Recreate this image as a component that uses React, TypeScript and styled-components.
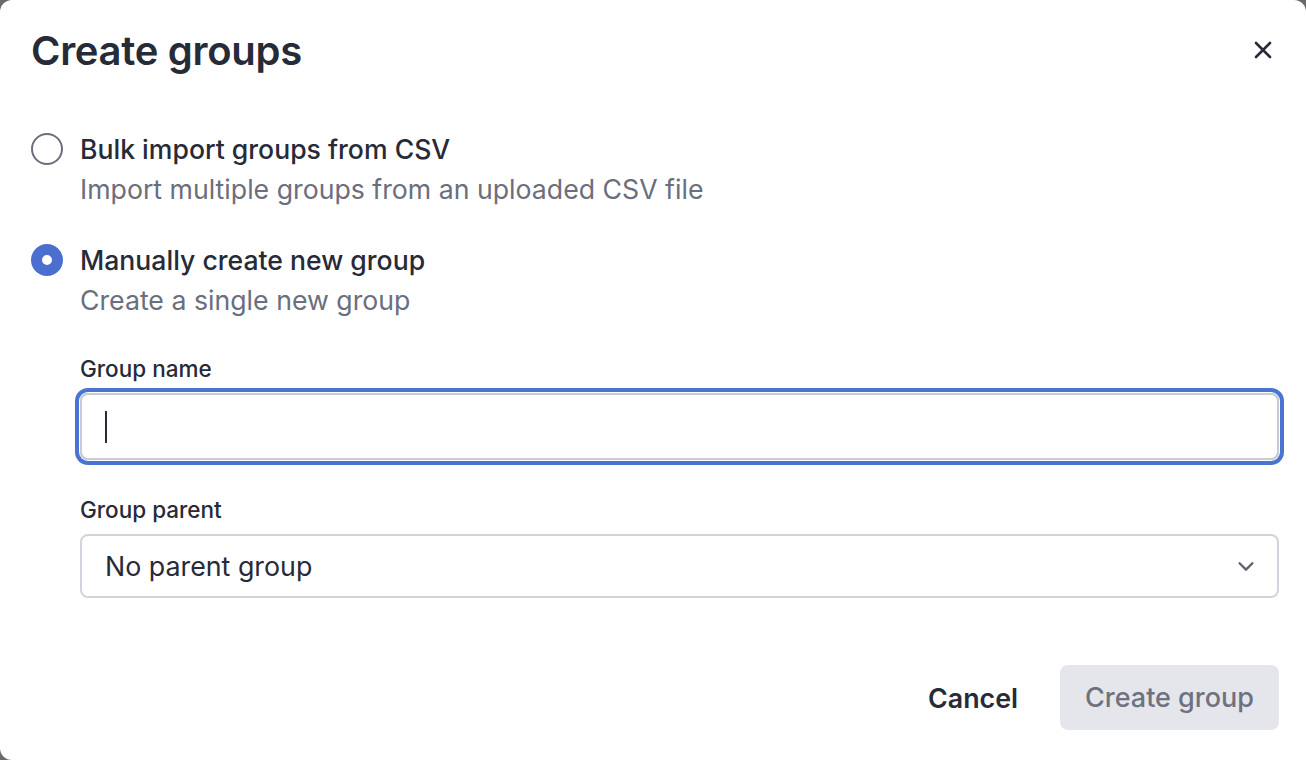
import React from "react";
import styled, { createGlobalStyle } from "styled-components";

const Global = createGlobalStyle`
  html, body { margin: 0; padding: 0; background: #6a6a6a; }
  body { font-family: Inter, "Noto Sans", sans-serif; -webkit-font-smoothing: antialiased; }
  * { box-sizing: border-box; }
`;

const Dialog = styled.div`
  width: 1306px;
  height: 760px;
  background: #ffffff;
  border-radius: 12px 12px 0 12px;
  padding: 26px 27px 0 31px;
  display: flex;
  flex-direction: column;
  color: #272a37;
`;

const Header = styled.div`
  display: flex;
  align-items: center;
  justify-content: space-between;
  height: 48px;
`;

const Title = styled.h1`
  margin: 0;
  font-size: 40px;
  font-weight: 600;
  letter-spacing: -0.3px;
  color: #272a37;
`;

const CloseButton = styled.button`
  border: none;
  background: none;
  padding: 0;
  width: 24px;
  height: 24px;
  display: flex;
  align-items: center;
  justify-content: center;
  color: #272a37;
  margin-right: 4px;
`;

const Options = styled.div`
  margin-top: 55px;
  display: flex;
  flex-direction: column;
  gap: 31px;
`;

const Option = styled.label`
  display: grid;
  grid-template-columns: 49px 1fr;
`;

const Radio = styled.span<{ $checked?: boolean }>`
  width: 32px;
  height: 32px;
  border-radius: 50%;
  border: ${p => (p.$checked ? "11px solid #4a6fcf" : "2px solid #6b6e7c")};
  background: #fff;
  align-self: center;
`;

const OptionTitle = styled.span`
  font-size: 26.6px;
  font-weight: 500;
  line-height: 40px;
  color: #272a37;
`;

const OptionDesc = styled.span`
  grid-column: 2;
  font-size: 26.7px;
  font-weight: 400;
  line-height: 40px;
  color: #6b6e7c;
`;

const Fields = styled.div`
  margin-left: 49px;
  margin-top: 34px;
  display: flex;
  flex-direction: column;
  gap: 35px;
`;

const Field = styled.div`
  display: flex;
  flex-direction: column;
  gap: 9px;
`;

const FieldLabel = styled.span`
  font-size: 22.5px;
  font-weight: 500;
  line-height: 30px;
  color: #272a37;
`;

const Input = styled.div`
  height: 67px;
  border: 2px solid #c9cad2;
  border-radius: 8px;
  box-shadow: 0 0 0 1px #fff, 0 0 0 5px #4a74d1;
  display: flex;
  align-items: center;
  padding-left: 23px;
`;

const Caret = styled.span`
  width: 2px;
  height: 32px;
  background: #272a37;
`;

const Select = styled.div`
  height: 64px;
  border: 2px solid #d3d4db;
  border-radius: 8px;
  display: flex;
  align-items: center;
  justify-content: space-between;
  padding: 0 20px 0 23px;
  font-size: 26.8px;
  color: #272a37;
`;

const Footer = styled.div`
  margin-top: 67px;
  display: flex;
  justify-content: flex-end;
  align-items: center;
  gap: 42px;
`;

const TextButton = styled.button`
  border: none;
  background: none;
  padding: 0;
  font-family: inherit;
  font-size: 26.8px;
  font-weight: 600;
  color: #272a37;
`;

const PrimaryButton = styled.button<{ $disabled?: boolean }>`
  border: none;
  height: 65px;
  width: 219px;
  padding: 0;
  border-radius: 8px;
  background: ${p => (p.$disabled ? "#e5e6eb" : "#4a6fcf")};
  color: ${p => (p.$disabled ? "#6e717f" : "#fff")};
  font-family: inherit;
  font-size: 27px;
  font-weight: 500;
`;

export default function App() {
  return (
    <>
      <Global />
      <Dialog>
        <Header>
          <Title>Create groups</Title>
          <CloseButton aria-label="Close">
            <svg width="20" height="20" viewBox="0 0 20 20" fill="none" stroke="currentColor" strokeWidth="2.6" strokeLinecap="round">
              <path d="M3 3 L17 17 M17 3 L3 17" />
            </svg>
          </CloseButton>
        </Header>
        <Options>
          <Option>
            <Radio />
            <OptionTitle>Bulk import groups from CSV</OptionTitle>
            <OptionDesc>Import multiple groups from an uploaded CSV file</OptionDesc>
          </Option>
          <Option>
            <Radio $checked />
            <OptionTitle>Manually create new group</OptionTitle>
            <OptionDesc>Create a single new group</OptionDesc>
          </Option>
        </Options>
        <Fields>
          <Field>
            <FieldLabel>Group name</FieldLabel>
            <Input>
              <Caret />
            </Input>
          </Field>
          <Field>
            <FieldLabel>Group parent</FieldLabel>
            <Select>
              <span>No parent group</span>
              <svg width="22" height="22" viewBox="0 0 24 24" fill="none" stroke="#5f6270" strokeWidth="2.6" strokeLinecap="round" strokeLinejoin="round">
                <path d="M5 9 L12 16 L19 9" />
              </svg>
            </Select>
          </Field>
        </Fields>
        <Footer>
          <TextButton>Cancel</TextButton>
          <PrimaryButton $disabled>Create group</PrimaryButton>
        </Footer>
      </Dialog>
    </>
  );
}
